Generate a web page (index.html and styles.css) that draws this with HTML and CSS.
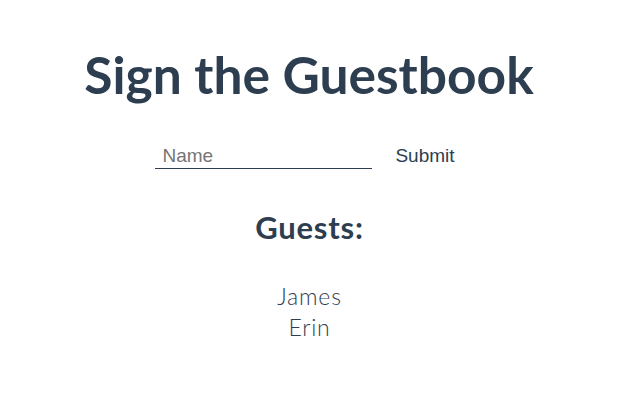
FILE: index.html
```html
<!DOCTYPE html>
<html lang="en">
<head>
<meta charset="utf-8">
<title>Guestbook</title>
<link rel="stylesheet" href="styles.css">
</head>
<body>
<div class="app">
  <h1 class="title">Sign the Guestbook</h1>
  <form class="sign-form">
    <input class="name-input" type="text" placeholder="Name">
    <button class="submit-btn" type="button">Submit</button>
  </form>
  <h2 class="guests-title">Guests:</h2>
  <ul class="guest-list">
    <li>James</li>
    <li>Erin</li>
  </ul>
</div>
</body>
</html>
```
FILE: styles.css
```css
html, body {
  margin: 0;
  padding: 0;
  background: #ffffff;
}
.app {
  font-family: Lato, "Noto Sans", sans-serif;
  color: #2c3e50;
  text-align: center;
  padding-top: 44px;
}
.title {
  font-size: 51.5px;
  font-weight: 700;
  margin: 0;
  padding-right: 5px;
  line-height: 60px;
}
.sign-form {
  display: flex;
  justify-content: center;
  align-items: center;
  gap: 23px;
  margin-top: 39px;
  height: 26px;
}
.name-input {
  box-sizing: border-box;
  width: 217px;
  height: 26px;
  border: none;
  border-bottom: 1px solid #2c3e50;
  font-family: "Liberation Sans", Arial, sans-serif;
  font-size: 19px;
  color: #2c3e50;
  padding: 0 7px;
  margin: 0;
  outline: none;
}
.name-input::placeholder {
  color: #757575;
}
.submit-btn {
  box-sizing: border-box;
  height: 26px;
  border: none;
  background: none;
  font-family: "Liberation Sans", Arial, sans-serif;
  font-size: 19px;
  color: #2c3e50;
  padding: 0 13px 0 0;
  margin: 0;
}
.guests-title {
  font-size: 31px;
  font-weight: 700;
  letter-spacing: 0.8px;
  margin: 38px 0 0;
  padding-right: 4px;
  line-height: 40px;
}
.guest-list {
  list-style: none;
  margin: 34px 0 0;
  padding: 0 4px 0 0;
  font-size: 23px;
  font-weight: 300;
  letter-spacing: 0.8px;
  line-height: 31px;
}
```
